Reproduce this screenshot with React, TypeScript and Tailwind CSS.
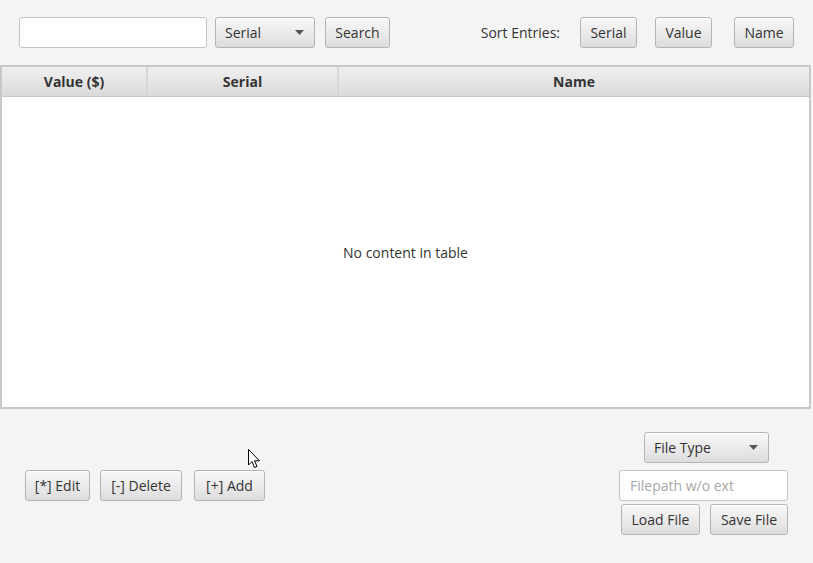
import React from "react";

const font = { fontFamily: '"Open Sans", "Noto Sans", sans-serif' };

function Btn({ w, children }: { w: string; children: React.ReactNode }) {
  return (
    <div
      className={`${w} h-[31px] flex items-center justify-center rounded-[3px] border border-[#b4b4b4] bg-gradient-to-b from-[#f8f8f8] to-[#dddddd] text-[14px] text-[#333333] shadow-[inset_0_1px_0_#ffffff]`}
    >
      {children}
    </div>
  );
}

function Combo({ w, label }: { w: string; label: string }) {
  return (
    <div
      className={`${w} h-[31px] flex items-center justify-between pl-[9px] pr-[10px] rounded-[3px] border border-[#b4b4b4] bg-gradient-to-b from-[#f8f8f8] to-[#dddddd] text-[14px] text-[#333333] shadow-[inset_0_1px_0_#ffffff]`}
    >
      <span>{label}</span>
      <svg width="9" height="5" viewBox="0 0 9 5">
        <path d="M0 0 H9 L4.5 5 Z" fill="#555555" />
      </svg>
    </div>
  );
}

export default function App() {
  return (
    <div
      className="relative w-[813px] h-[563px] bg-[#f4f4f4] flex flex-col overflow-hidden"
      style={font}
    >
      {/* top bar */}
      <div className="h-[65px] flex items-start pt-[17px] pl-[19px] pr-[19px]">
        <div className="w-[188px] h-[31px] rounded-[3px] border border-[#c4c4c4] bg-white" />
        <div className="ml-[8px]">
          <Combo w="w-[100px]" label="Serial" />
        </div>
        <div className="ml-[10px]">
          <Btn w="w-[65px]">Search</Btn>
        </div>
        <div className="flex-1" />
        <div className="h-[31px] flex items-center text-[14px] text-[#333333]">Sort Entries:</div>
        <div className="ml-[20px]">
          <Btn w="w-[57px]">Serial</Btn>
        </div>
        <div className="ml-[18px]">
          <Btn w="w-[57px]">Value</Btn>
        </div>
        <div className="ml-[22px]">
          <Btn w="w-[60px]">Name</Btn>
        </div>
      </div>

      {/* table */}
      <div className="w-[811px] h-[344px] border-2 border-[#c8c8c8] bg-white flex flex-col">
        <div className="h-[30px] flex bg-gradient-to-b from-[#f0f0f0] to-[#dadada] border-b border-[#c8c8c8] text-[14px] font-bold text-[#333333]">
          <div className="w-[146px] flex items-center justify-center border-r-2 border-[#d6d6d6]">Value ($)</div>
          <div className="w-[191px] flex items-center justify-center border-r-2 border-[#d6d6d6]">Serial</div>
          <div className="flex-1 flex items-center justify-center">Name</div>
        </div>
        <div className="flex-1 flex items-center justify-center text-[14px] text-[#333333]">
          No content in table
        </div>
      </div>

      {/* bottom */}
      <div className="flex-1 flex justify-between items-start">
        <div className="pl-[25px] pt-[61px] flex gap-[10px]">
          <Btn w="w-[65px]">[*] Edit</Btn>
          <div className="flex gap-[12px]">
            <Btn w="w-[82px]">[-] Delete</Btn>
            <Btn w="w-[71px]">[+] Add</Btn>
          </div>
        </div>
        <div className="pr-[25px] pt-[23px] flex flex-col w-[194px]">
          <div className="pl-[25px]">
            <Combo w="w-[125px]" label="File Type" />
          </div>
          <div className="mt-[7px] w-[169px] h-[31px] rounded-[3px] border border-[#c4c4c4] bg-white flex items-center pl-[10px] text-[14px] text-[#a8a8a8]">
            Filepath w/o ext
          </div>
          <div className="mt-[3px] flex justify-between pl-[2px]">
            <div className="h-[32px]"><Btn w="w-[79px]">Load File</Btn></div>
            <Btn w="w-[78px]">Save File</Btn>
          </div>
        </div>
      </div>

      {/* mouse cursor */}
      <svg
        className="absolute left-[248px] top-[449px]"
        width="14"
        height="21"
        viewBox="0 0 14 21"
      >
        <path
          d="M0.5 0.5 L0.5 16 L4 12.5 L6.5 18.5 L9 17.5 L6.5 11.8 L11.5 11.8 Z"
          fill="#ffffff"
          stroke="#000000"
          strokeWidth="1"
          strokeLinejoin="miter"
        />
      </svg>
    </div>
  );
}
